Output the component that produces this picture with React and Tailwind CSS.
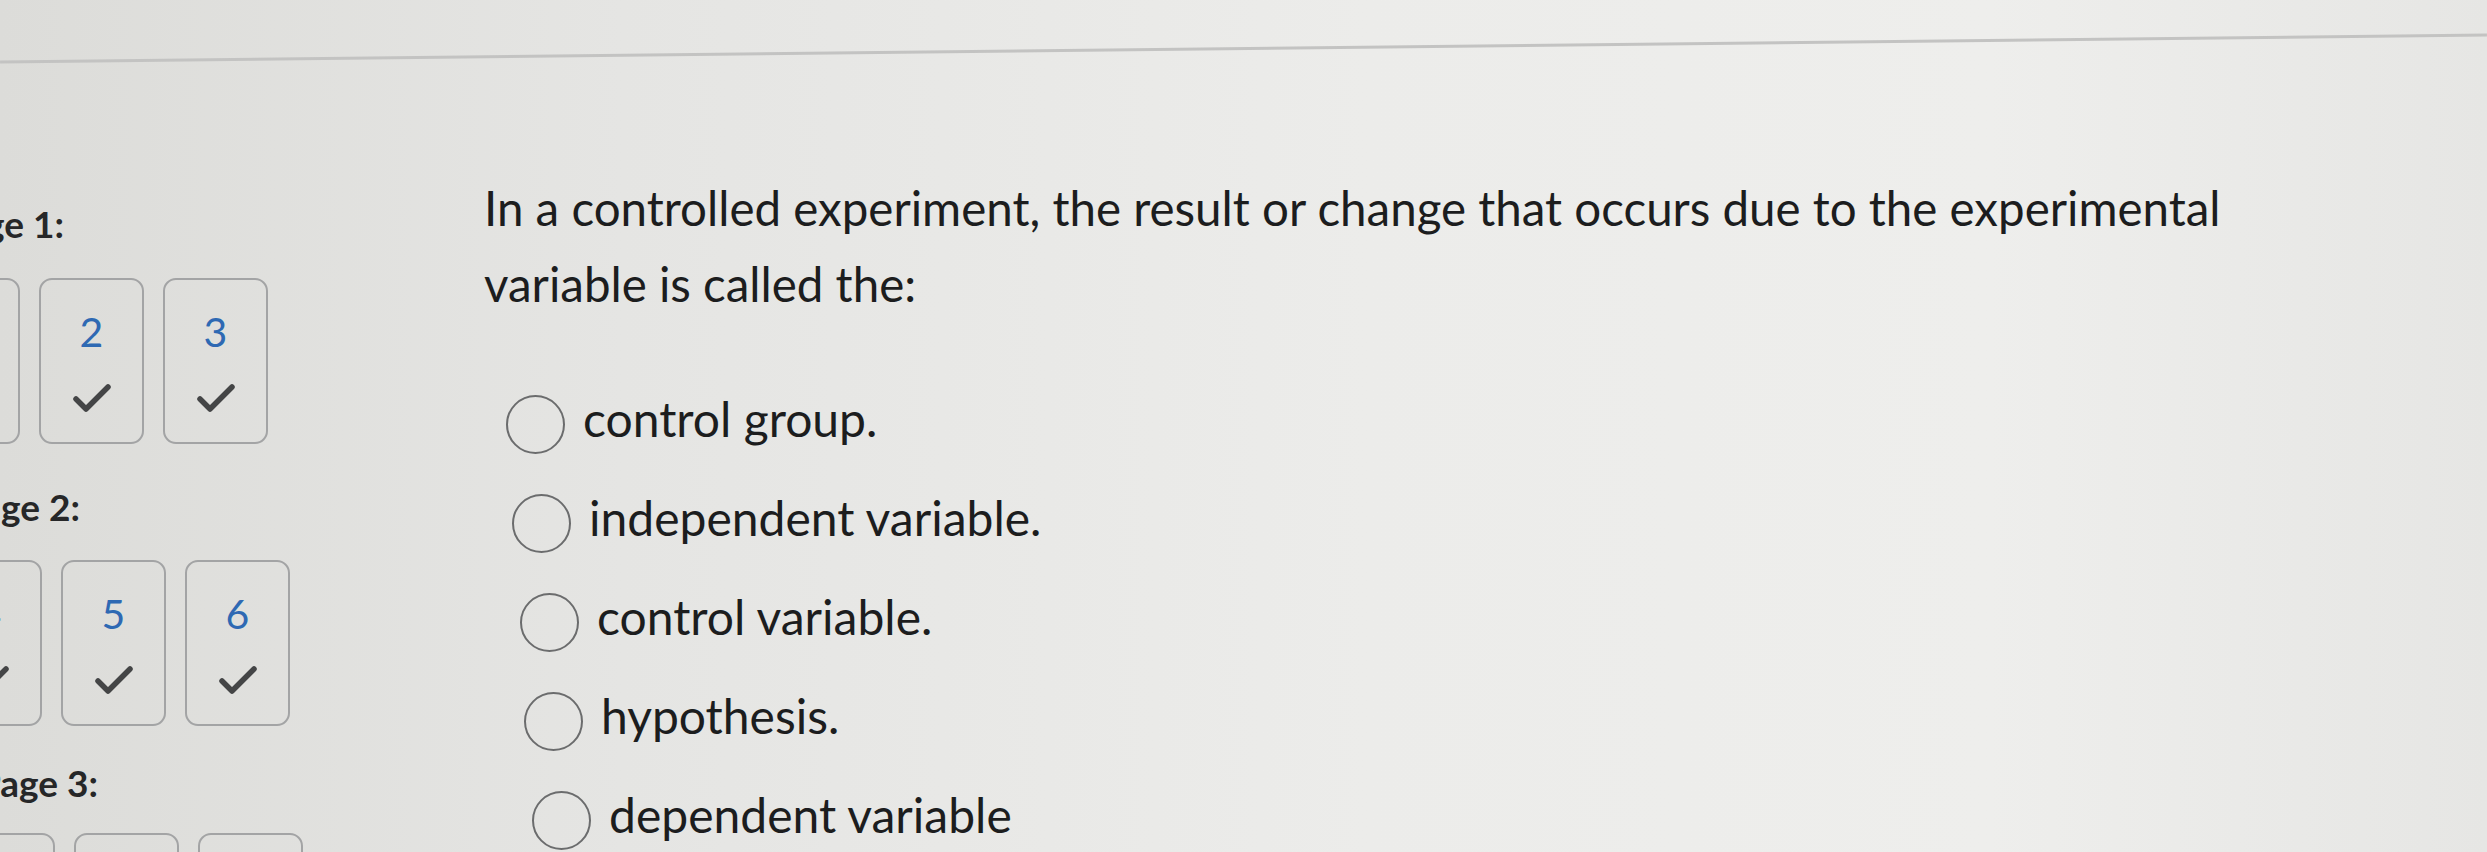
import React from 'react';

const pages = [
  { label: 'Page 1:', labelClass: 'ml-[29px]', groupClass: 'ml-[-85px] mt-0', boxesClass: 'mt-[33px]', numbers: ['1', '2', '3'] },
  { label: 'Page 2:', labelClass: 'ml-[23px]', groupClass: 'ml-[-63px] mt-[41px]', boxesClass: 'mt-[32px]', numbers: ['4', '5', '6'] },
  { label: 'Page 3:', labelClass: 'ml-[28px]', groupClass: 'ml-[-50px] mt-[35px]', boxesClass: 'mt-[29px]', numbers: ['7', '8', '9'] },
];

const answers = [
  { text: 'control group.', shift: 'ml-[0px]' },
  { text: 'independent variable.', shift: 'ml-[6px]' },
  { text: 'control variable.', shift: 'ml-[14px]' },
  { text: 'hypothesis.', shift: 'ml-[18px]' },
  { text: 'dependent variable', shift: 'ml-[26px]' },
];

const Check = () => (
  <svg width="40" height="30" viewBox="0 0 40 30" fill="none">
    <polyline points="4,16 14,26 36,4" stroke="#444546" strokeWidth="5.5" strokeLinecap="round" strokeLinejoin="round" />
  </svg>
);

const PageBox = ({ number }) => (
  <div className="w-[105px] h-[166px] shrink-0 rounded-[13px] border-2 border-[#a3a4a5] flex flex-col items-center pt-[28px]">
    <span className="text-[41px] leading-[48px] text-[#2e69b3]">{number}</span>
    <div className="mt-[27px]"><Check /></div>
  </div>
);

export default function App() {
  return (
    <div
      className="w-full h-[852px] overflow-hidden text-[#1c1d1e] bg-[linear-gradient(90deg,#dcdcd9_0%,#e5e5e3_25%,#ececea_55%,#eeeeec_80%,#e6e6e4_100%)]"
      style={{ fontFamily: 'Lato, "Open Sans", Arial, sans-serif' }}
    >
      <div className="pt-[47px]">
        <div className="h-[3px] w-full bg-[#c3c3c2] -rotate-[0.62deg]" />
      </div>

      <div className="flex">
        <aside className="w-[484px] shrink-0 overflow-hidden pt-[152px]">
          {pages.map(page => (
            <div key={page.label} className={page.groupClass}>
              <div className={`text-[37px] leading-[43px] font-bold text-[#262728] whitespace-nowrap ${page.labelClass}`}>{page.label}</div>
              <div className={`flex gap-[19px] ${page.boxesClass}`}>
                {page.numbers.map(n => <PageBox key={n} number={n} />)}
              </div>
            </div>
          ))}
        </aside>

        <main className="pt-[120px] pr-[100px]">
          <p className="text-[47.5px] leading-[76px] text-[#1c1d1e] max-w-[1800px]">
            In a controlled experiment, the result or change that occurs due to the experimental variable is called the:
          </p>

          <div className="mt-[68px] ml-[22px] flex flex-col gap-[35px]">
            {answers.map(answer => (
              <label key={answer.text} className={`flex items-start gap-[18px] ${answer.shift}`}>
                <span className="mt-[5px] w-[59px] h-[59px] shrink-0 rounded-full border-2 border-[#6b6c6d]" />
                <span className="text-[48px] leading-[58px] text-[#1c1d1e] whitespace-nowrap">{answer.text}</span>
              </label>
            ))}
          </div>
        </main>
      </div>
    </div>
  );
}
